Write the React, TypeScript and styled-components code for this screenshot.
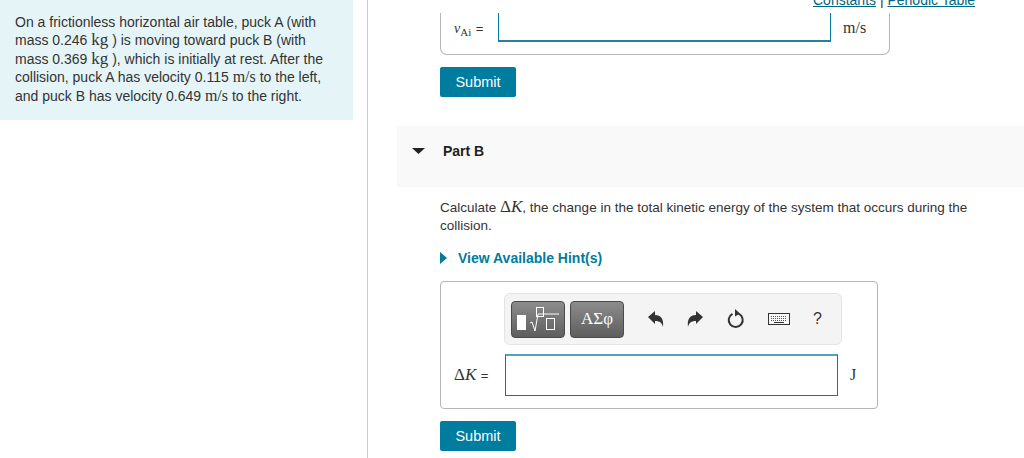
import React from 'react';
import styled, { createGlobalStyle } from 'styled-components';

const GlobalStyle = createGlobalStyle`
    html, body {
        margin: 0;
        padding: 0;
        background: #ffffff;
    }
    * {
        box-sizing: border-box;
    }
`

const Math = styled.span<{ $size?: number }>`
    font-family: "Liberation Serif", "DejaVu Serif", serif;
    font-size: ${props => props.$size || 16}px;
    color: #333333;
`

const Italic = styled.i`
    font-family: "Liberation Serif", serif;
`

const Sub = styled.sub`
    font-size: 11px;
    line-height: 0;
    vertical-align: -3px;
`

const App: React.FC = () => {
    return (
        <Page>
            <GlobalStyle />
            <Sidebar>
                <Info>
                    On a frictionless horizontal air table, puck A (with mass 0.246 <Math $size={17}>kg</Math> ) is moving toward puck B (with mass 0.369 <Math $size={17}>kg</Math> ), which is initially at rest. After the collision, puck A has velocity 0.115 <Math>m/s</Math> to the left, and puck B has velocity 0.649 <Math>m/s</Math> to the right.
                </Info>
            </Sidebar>
            <Main>
                <TopLinks>
                    <Link>Constants</Link> | <Link>Periodic Table</Link>
                </TopLinks>
                <Scroller>
                    <Section>
                        <ClippedAnswer>
                            <AnswerRow>
                                <VarLabel $width={57}>
                                    <Math $size={14}><Italic>v</Italic><Sub>Ai</Sub></Math>&nbsp;<Equals>=</Equals>
                                </VarLabel>
                                <ClippedInput />
                                <Unit>m/s</Unit>
                            </AnswerRow>
                        </ClippedAnswer>
                        <Submit>Submit</Submit>
                    </Section>
                    <PartHeader>
                        <svg width="13" height="6" viewBox="0 0 13 6"><path d="M0 0h13L6.5 6z" fill="#222222" /></svg>
                        <PartTitle>Part B</PartTitle>
                    </PartHeader>
                    <Section>
                        <Question>
                            Calculate <Math $size={17}>Δ<Italic>K</Italic></Math>, the change in the total kinetic energy of the system that occurs during the collision.
                        </Question>
                        <Hint>
                            <svg width="7" height="12" viewBox="0 0 7 12"><path d="M0 0l7 6-7 6z" fill="#007c9e" /></svg>
                            View Available Hint(s)
                        </Hint>
                        <AnswerBox>
                            <Toolbar>
                                <ToolButton $width={54}>
                                    <svg width="44" height="30" viewBox="0 0 44 30">
                                        <rect x="1" y="11" width="9" height="15" fill="#ffffff" />
                                        <rect x="20.5" y="3.5" width="7" height="9" fill="none" stroke="#ffffff" />
                                        <path d="M14 19l2-1 3 9 3-17h21" fill="none" stroke="#ffffff" strokeWidth="1" />
                                        <rect x="33.5" y="14.5" width="8" height="11" fill="none" stroke="#ffffff" transform="translate(-3 0)" />
                                    </svg>
                                </ToolButton>
                                <ToolButton $width={54}>ΑΣφ</ToolButton>
                                <ToolIcons>
                                    <svg width="16" height="18" viewBox="0 0 16 18">
                                        <path d="M0 7l7-6v4c6 0 9 4 8 12-1-4-3-6-8-6v3z" fill="#333333" />
                                    </svg>
                                    <svg width="16" height="18" viewBox="0 0 16 18">
                                        <path d="M16 7L9 1v4C3 5 0 9 1 17c1-4 3-6 8-6v3z" fill="#333333" />
                                    </svg>
                                    <svg width="18" height="20" viewBox="0 0 18 20">
                                        <path d="M11.5 4.6A7 7 0 1 1 5.5 4.8" fill="none" stroke="#333333" strokeWidth="2" />
                                        <path d="M8 0l5 4.500-5 3z" fill="#333333" />
                                    </svg>
                                    <svg width="22" height="12" viewBox="0 0 22 12">
                                        <rect x="0.500" y="0.500" width="21" height="11" fill="#f8f8f8" stroke="#333333" />
                                        <path d="M3 3.500h16M3 5.500h16M3 7.500h16" stroke="#555555" strokeDasharray="1 1" />
                                        <path d="M6 9.500h10" stroke="#333333" />
                                    </svg>
                                    <HelpMark>?</HelpMark>
                                </ToolIcons>
                            </Toolbar>
                            <AnswerRow>
                                <VarLabel $width={64}>
                                    <Math $size={17}>Δ<Italic>K</Italic></Math>&nbsp;<Equals>=</Equals>
                                </VarLabel>
                                <AnswerInput />
                                <Unit><Math>J</Math></Unit>
                            </AnswerRow>
                        </AnswerBox>
                        <Submit>Submit</Submit>
                    </Section>
                </Scroller>
            </Main>
        </Page>
    );
}

const Page = styled.div`
    display: flex;
    width: 1024px;
    height: 458px;
    overflow: hidden;
    font-family: "Liberation Sans", Arial, sans-serif;
    color: #333333;
`

const Sidebar = styled.aside`
    width: 368px;
    flex: none;
    border-right: 1px solid #cccccc;
`

const Info = styled.div`
    width: 353px;
    height: 120px;
    padding: 13px 15px 0;
    background: #e5f5f7;
    font-size: 14px;
    line-height: 18.4px;
`

const Main = styled.main`
    flex: 1;
    min-width: 0;
    display: flex;
    flex-direction: column;
`

const TopLinks = styled.div`
    height: 13px;
    flex: none;
    overflow: hidden;
    padding-left: 445px;
    margin-top: -8px;
    height: 21px;
    font-size: 14px;
    line-height: 16px;
    white-space: nowrap;
    width: 656px;
`

const Link = styled.a`
    color: #00667f;
    text-decoration: underline;
`

const Scroller = styled.div`
    flex: 1;
    min-height: 0;
    padding: 0 0 0 29px;
`

const Section = styled.section`
    padding-left: 43px;
`

const ClippedAnswer = styled.div`
    width: 450px;
    height: 42px;
    padding-left: 0;
    border: 1px solid #b5b5b5;
    border-top: none;
    border-radius: 0 0 7px 7px;
`

const AnswerRow = styled.div`
    display: flex;
    align-items: center;
`

const VarLabel = styled.div<{ $width: number }>`
    width: ${props => props.$width}px;
    flex: none;
    padding-left: 13px;
    white-space: nowrap;
`

const Equals = styled.span`
    font-size: 13px;
`

const ClippedInput = styled.div`
    width: 333px;
    height: 29px;
    flex: none;
    margin-bottom: 0;
    border: 1px solid #007c9e;
    border-top: none;
    border-bottom: 2px solid #2a7f9a;
`

const AnswerInput = styled.div`
    width: 333px;
    height: 42px;
    flex: none;
    border: 1px solid #007c9e;
    border-top: 2px solid #4fa3bb;
`

const Unit = styled(Math)`
    font-size: 16px;
    margin-left: 12px;
`

const Submit = styled.button`
    display: block;
    width: 76px;
    height: 30px;
    margin-top: 12px;
    padding: 0;
    border: none;
    border-radius: 2px;
    background: #007c9e;
    color: #ffffff;
    font-family: "Liberation Sans", Arial, sans-serif;
    font-size: 14.5px;
`

const PartHeader = styled.div`
    display: flex;
    align-items: flex-start;
    height: 61px;
    margin-top: 29px;
    padding: 17px 0 0 15px;
    background: #f9f9f9;

    svg {
        margin-top: 5px;
    }
`

const PartTitle = styled.h2`
    margin: 0 0 0 18px;
    font-size: 14px;
    line-height: 16px;
    font-weight: bold;
    color: #222222;
`

const Question = styled.p`
    margin: 11px 0 0;
    width: 566px;
    font-size: 13.5px;
    line-height: 18px;
`

const Hint = styled.div`
    display: flex;
    align-items: center;
    gap: 11px;
    margin-top: 15px;
    font-size: 14px;
    line-height: 16px;
    font-weight: bold;
    color: #007c9e;
`

const AnswerBox = styled.div`
    width: 438px;
    height: 128px;
    margin-top: 15px;
    padding-top: 11px;
    border: 1px solid #b5b5b5;
    border-radius: 4px;
`

const Toolbar = styled.div`
    display: flex;
    align-items: center;
    gap: 5px;
    width: 338px;
    height: 52px;
    margin: 0 0 9px 63px;
    padding-left: 6px;
    background: #f4f4f4;
    border: 1px solid #e4e4e4;
    border-radius: 6px;
`

const ToolButton = styled.div<{ $width: number }>`
    display: flex;
    align-items: center;
    justify-content: center;
    width: ${props => props.$width}px;
    height: 37px;
    border: 1px solid #4a4a4a;
    border-radius: 4px;
    background: linear-gradient(#8c8c8c, #5e5e5e);
    color: #ffffff;
    font-family: "Liberation Serif", serif;
    font-size: 17px;
`

const ToolIcons = styled.div`
    display: flex;
    align-items: center;
    justify-content: space-between;
    flex: 1;
    padding: 0 19px 0 19px;
`

const HelpMark = styled.span`
    font-size: 16px;
    color: #333333;
`

export default App;
